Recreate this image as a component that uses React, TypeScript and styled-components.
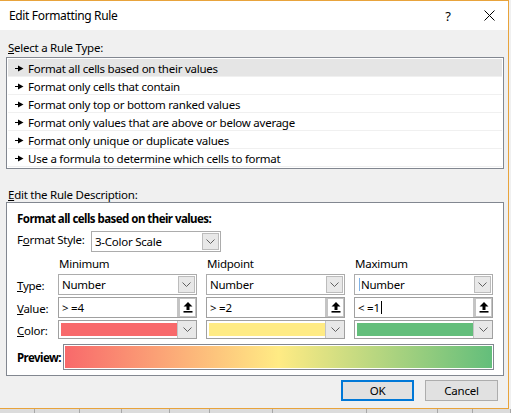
import React from 'react';
import styled, { createGlobalStyle } from 'styled-components';

const GlobalStyle = createGlobalStyle`
  html, body {
    margin: 0;
    padding: 0;
    background: #f0f0f0;
  }
  body {
    width: 511px;
    height: 413px;
    overflow: hidden;
    font-family: "Segoe UI", "Noto Sans", "Open Sans", sans-serif;
    font-size: 11.5px;
    letter-spacing: -0.25px;
    color: #000;
  }
  * { box-sizing: border-box; }
`;

const Screen = styled.div`
    width: 511px;
    height: 413px;
    display: flex;
    flex-direction: column;
`;

const Window = styled.div`
    width: 509px;
    height: 409px;
    border-top: 1px solid #e8a33b;
    border-right: 1px solid #e8a33b;
    border-bottom: 1px solid #e8a33b;
    background: #f0f0f0;
    display: flex;
    flex-direction: column;
`;

const TitleBar = styled.div`
    height: 29px;
    background: #fff;
    display: flex;
    align-items: center;
    padding-left: 9px;
    font-size: 12px;
    letter-spacing: -0.35px;
`;

const TitleControls = styled.div`
    margin-left: auto;
    display: flex;
    height: 100%;
`;

const TitleButton = styled.div<{ $w: number }>`
    width: ${p => p.$w}px;
    display: flex;
    align-items: center;
    justify-content: center;
    font-size: 13px;
`;

const Body = styled.div`
    flex: 1;
    display: flex;
    flex-direction: column;
    padding-left: 6px;
`;

const SectionLabel = styled.div<{ $top: number }>`
    margin-top: ${p => p.$top}px;
    padding-left: 2px;
    line-height: 15px;
    height: 15px;
`;

const ListBox = styled.div`
    margin-top: 2px;
    width: 498px;
    border: 1px solid #828790;
    background: #fff;
    padding: 1px;
`;

const ListItem = styled.div<{ $selected?: boolean }>`
    height: 18px;
    display: flex;
    align-items: center;
    gap: 4px;
    padding-left: 7px;
    padding-top: 1px;
    border-bottom: 1px solid #f0f0f0;
    background: ${p => (p.$selected ? '#e5e5e5' : '#fff')};
`;

const DescBox = styled.div`
    width: 498px;
    height: 174px;
    border: 1px solid #828790;
    background: #fff;
    padding: 8px 0 0 10px;
    display: flex;
    flex-direction: column;
`;

const Heading = styled.div`
    font-weight: bold;
    line-height: 15px;
    letter-spacing: -0.55px;
`;

const StyleRow = styled.div`
    margin-top: 5px;
    display: flex;
    align-items: flex-start;
`;

const RowLabel = styled.div<{ $w?: number }>`
    width: ${p => p.$w ?? 41}px;
    line-height: 15px;
    margin-top: 1px;
    white-space: nowrap;
`;

const Grid = styled.div`
    margin-top: 4px;
    display: grid;
    grid-template-columns: 32px repeat(3, 139px);
    column-gap: 9px;
    grid-template-rows: 16px 21px 21px 19px;
    row-gap: 2px;
    align-items: center;
`;

const ColHead = styled.div`
    padding-left: 1px;
    line-height: 15px;
    align-self: start;
`;

const Combo = styled.div<{ $w?: number }>`
    width: ${p => (p.$w ? `${p.$w}px` : '100%')};
    height: 21px;
    border: 1px solid #acacac;
    background: #fff;
    display: flex;
    align-items: stretch;
`;

const ComboText = styled.div`
    flex: 1;
    padding-left: 3px;
    line-height: 19px;
    display: flex;
    align-items: center;
    white-space: pre;
`;

const Caret = styled.span<{ $color: string }>`
    display: inline-block;
    width: 1px;
    height: 13px;
    background: ${p => p.$color};
    margin: 0 1px;
`;

const ComboButton = styled.div`
    width: 17px;
    margin: 1px;
    border: 1px solid #bcbcbc;
    background: #e8e8e8;
    display: flex;
    align-items: center;
    justify-content: center;
`;

const ValueBox = styled.div`
    height: 21px;
    border: 1px solid #a0a0a0;
    background: #fff;
    display: flex;
`;

const RefButton = styled.div`
    width: 19px;
    border-left: 2px solid #c4c4c4;
    background: #fff;
    display: flex;
    align-items: center;
    justify-content: center;
    box-shadow: inset 0 0 0 1px #c4c4c4;
`;

const ColorBox = styled.div`
    height: 19px;
    border: 1px solid #a0a0a0;
    background: #fff;
    display: flex;
    padding: 2px 0 2px 2px;
`;

const Swatch = styled.div<{ $color: string }>`
    flex: 1;
    background: ${p => p.$color};
`;

const ColorButton = styled.div`
    width: 19px;
    margin: -2px 0;
    background: #e8e8e8;
    border-left: 1px solid #c4c4c4;
    display: flex;
    align-items: center;
    justify-content: center;
`;

const PreviewRow = styled.div`
    margin-top: 5px;
    display: flex;
    align-items: center;
`;

const PreviewLabel = styled.div`
    width: 46px;
    flex-shrink: 0;
    white-space: nowrap;
    font-weight: bold;
    letter-spacing: -0.55px;
`;

const PreviewBar = styled.div`
    width: 431px;
    height: 26px;
    border: 1px solid #828790;
    padding: 1px;
    background: #fff;
`;

const Gradient = styled.div`
    height: 100%;
    background: linear-gradient(to right, #f8696b 0%, #ffeb84 50%, #63be7b 100%);
`;

const ButtonRow = styled.div`
    margin-top: 4px;
    display: flex;
    justify-content: flex-end;
    gap: 11px;
    padding-right: 10px;
`;

const Button = styled.div<{ $default?: boolean }>`
    width: 73px;
    height: 21px;
    background: #e1e1e1;
    border: ${p => (p.$default ? '2px solid #0078d7' : '1px solid #adadad')};
    display: flex;
    align-items: center;
    justify-content: center;
`;

const BehindStrip = styled.div`
    flex: 1;
    display: flex;
    background: #dcdcdc;
`;

const BehindCell = styled.div<{ $w: number }>`
    width: ${p => p.$w}px;
    border-right: 1px solid #a8a8a8;
`;

const Chevron = () => (
  <svg width="9" height="5" viewBox="0 0 9 5">
    <polyline points="0.5,0.5 4.5,4.5 8.5,0.5" fill="none" stroke="#606060" strokeWidth="1" />
  </svg>
);

const RefArrow = () => (
  <svg width="10" height="11" viewBox="0 0 10 11">
    <path d="M5 0 L9.5 4.5 H6.5 V8 H3.5 V4.5 H0.5 Z" fill="#000" />
    <rect x="0.5" y="9" width="9" height="1.6" fill="#000" />
  </svg>
);

const Bullet = () => (
  <svg width="9" height="7" viewBox="0 0 9 7">
    <rect x="0" y="3" width="4" height="1" fill="#000" />
    <path d="M3 0.5 L8.5 3.5 L3 6.5 Z" fill="#000" />
  </svg>
);

const CloseIcon = () => (
  <svg width="11" height="11" viewBox="0 0 11 11">
    <path d="M0.5 0.5 L10.5 10.5 M10.5 0.5 L0.5 10.5" stroke="#000" strokeWidth="1" />
  </svg>
);

const ruleTypes = [
  'Format all cells based on their values',
  'Format only cells that contain',
  'Format only top or bottom ranked values',
  'Format only values that are above or below average',
  'Format only unique or duplicate values',
  'Use a formula to determine which cells to format',
];

const columns = [
  { head: 'Minimum', value: '> =4', color: '#f8696b', caret: false },
  { head: 'Midpoint', value: '> =2', color: '#ffeb84', caret: false },
  { head: 'Maximum', value: '< =1', color: '#63be7b', caret: true },
];

const strip = [35, 45, 42, 48, 40, 63, 94, 71, 35, 38];

export default function App() {
  return (
    <Screen>
      <GlobalStyle />
      <Window>
        <TitleBar>
          Edit Formatting Rule
          <TitleControls>
            <TitleButton $w={46}>?</TitleButton>
            <TitleButton $w={37}><CloseIcon /></TitleButton>
          </TitleControls>
        </TitleBar>
        <Body>
          <SectionLabel $top={10}><u>S</u>elect a Rule Type:</SectionLabel>
          <ListBox>
            {ruleTypes.map((t, i) => (
              <ListItem key={t} $selected={i === 0}>
                <Bullet />
                {t}
              </ListItem>
            ))}
          </ListBox>
          <SectionLabel $top={18}><u>E</u>dit the Rule Description:</SectionLabel>
          <DescBox>
            <Heading>Format all cells based on their values:</Heading>
            <StyleRow>
              <RowLabel $w={74}>F<u>o</u>rmat Style:</RowLabel>
              <Combo $w={130}>
                <ComboText>3-Color Scale</ComboText>
                <ComboButton><Chevron /></ComboButton>
              </Combo>
            </StyleRow>
            <Grid>
              <div />
              {columns.map(c => <ColHead key={c.head}>{c.head}</ColHead>)}
              <RowLabel><u>T</u>ype:</RowLabel>
              {columns.map((c, i) => (
                <Combo key={c.head}>
                  <ComboText>
                    {i === 2 && <Caret $color="#7fb2e6" />}
                    Number
                  </ComboText>
                  <ComboButton><Chevron /></ComboButton>
                </Combo>
              ))}
              <RowLabel><u>V</u>alue:</RowLabel>
              {columns.map(c => (
                <ValueBox key={c.head}>
                  <ComboText>
                    {c.value}
                    {c.caret && <Caret $color="#000" />}
                  </ComboText>
                  <RefButton><RefArrow /></RefButton>
                </ValueBox>
              ))}
              <RowLabel><u>C</u>olor:</RowLabel>
              {columns.map(c => (
                <ColorBox key={c.head}>
                  <Swatch $color={c.color} />
                  <ColorButton><Chevron /></ColorButton>
                </ColorBox>
              ))}
            </Grid>
            <PreviewRow>
              <PreviewLabel>Preview:</PreviewLabel>
              <PreviewBar><Gradient /></PreviewBar>
            </PreviewRow>
          </DescBox>
          <ButtonRow>
            <Button $default>OK</Button>
            <Button>Cancel</Button>
          </ButtonRow>
        </Body>
      </Window>
      <BehindStrip>
        {strip.map((w, i) => <BehindCell key={i} $w={w} />)}
      </BehindStrip>
    </Screen>
  );
}
